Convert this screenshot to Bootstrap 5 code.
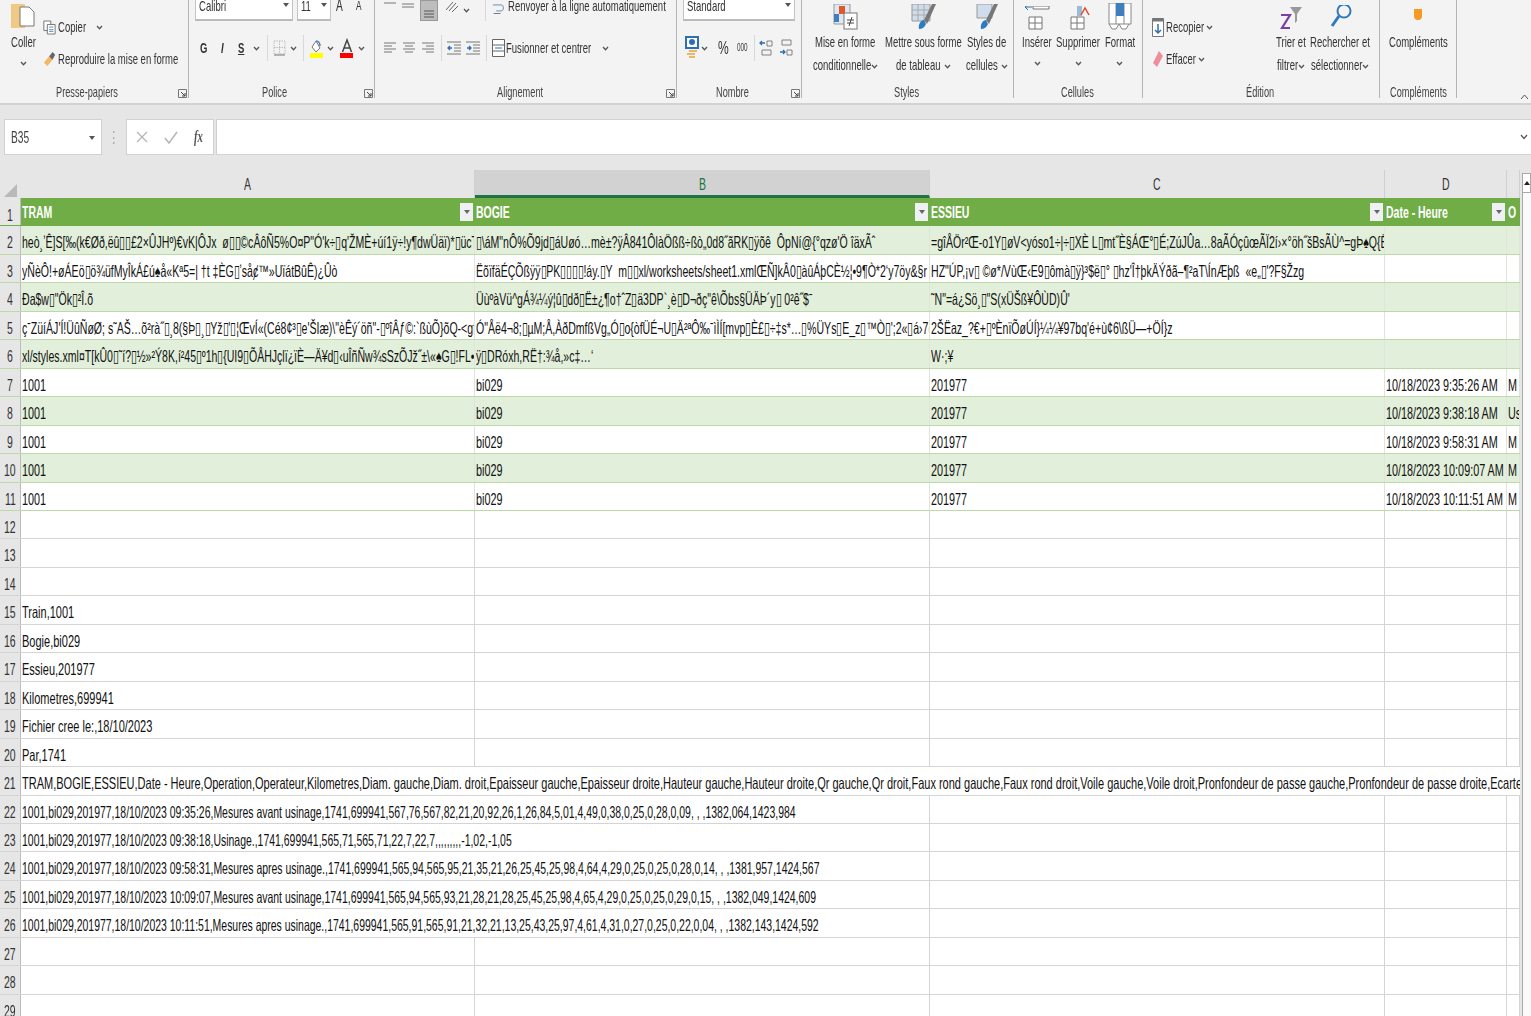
<!DOCTYPE html>
<html lang="fr"><head><meta charset="utf-8"><title>Excel</title>
<link href="https://cdn.jsdelivr.net/npm/bootstrap@5.3.0/dist/css/bootstrap.min.css" rel="stylesheet">
<style>
html,body{height:1016px;overflow:hidden;margin:0;background:#e6e6e6}
body{--k:.635;font-family:"Liberation Sans",sans-serif;font-size:15px;color:#333;line-height:1.2}
.tw{display:inline-block;white-space:pre;transform:scaleX(var(--k));transform-origin:0 0}
.text-decoration-underline .tw{text-decoration:underline}
svg{flex:none}
.ribbon{height:105px;background:#f3f3f3;border-bottom:2px solid #d2d2d2;overflow:hidden;filter:blur(.3px)}
.rgroup{position:relative;flex:none;height:98px;border-right:1px solid #b4b4b4}
.rbody{height:84px;overflow:hidden}
.rlabel{text-align:center;color:#444;font-size:14.5px;height:14px;line-height:16px}
.lp20{padding-right:20px}.lp14{padding-right:14px}.lp8{padding-right:8px}.lp4{padding-right:4px}.lp10{padding-right:10px}
.launch{position:absolute;right:1px;bottom:0;width:9px;height:9px}
.bigb{flex:none;display:flex;flex-direction:column;align-items:center;text-align:center}
.bigicon{height:30px;display:flex;align-items:flex-end;overflow:hidden;flex:none}
.bigline{height:23px;line-height:23px;white-space:nowrap}
.rowb{display:flex;align-items:center;gap:2px;white-space:nowrap;height:32px}
.chev{width:7px;height:5px;flex:none}
.selectb{background:#fff;border:1px solid #c4c4c4;border-top:0;border-bottom:2px solid #bbb;height:21px;display:flex;justify-content:space-between;padding:0 3px 4px;align-items:flex-end;overflow:hidden;flex:none}
.tri{width:0;height:0;border-left:3px solid transparent;border-right:3px solid transparent;border-top:4px solid #555;margin-bottom:8px}
.sepv{width:1px;background:#d8d8d8;height:26px;flex:none}
.toprow{height:21px;display:flex;align-items:center}
.botrow{height:32px;margin-top:11px;display:flex;align-items:center}
.up{margin-bottom:9px}
.boxg{width:20px;text-align:center;font-weight:700}
.boxi{width:17px;text-align:center;font-weight:700}
.ml2{margin-left:2px}.ml4{margin-left:4px}.ml5{margin-left:5px}.ml6{margin-left:6px}.ml7{margin-left:7px}.ml8{margin-left:8px}.ml9{margin-left:9px}.ml10{margin-left:10px}.ml13{margin-left:13px}.mln2{margin-left:-2px}.mln1{margin-left:-1px}.mln6{margin-left:-6px}
.fbar{height:51px;background:#e6e6e6;padding-top:14px;gap:2px;filter:blur(.3px)}
.namebox{width:98px;height:36px;margin-left:4px;background:#fff;border:1px solid #d2d2d2;padding:2px 6px 0;font-size:16px;color:#444}
.fxdots{width:20px;text-align:center;color:#999;font-size:15px;height:36px}
.fxbox{width:88px;height:36px;background:#fff;border:1px solid #d2d2d2;padding:0 9px;gap:16px;flex:none}
.fxt{font-family:"Liberation Serif",serif;font-size:17px;color:#555}
.finput{flex:1;height:36px;background:#fff;border:1px solid #d2d2d2;border-right:0;justify-content:flex-end;padding-right:3px}
.sheetwrap{height:860px;overflow:hidden;padding-top:14px;--k:.655}
.sheet{width:1520px;flex:none;background:#fff;font-size:16.5px;color:#111;filter:blur(.3px)}
.xrow{display:flex;height:28.46px;align-items:stretch;border-bottom:1.5px solid #d4d4d4}
.gk .xc:not(.rn){--k:.64}
.lk .xc:not(.rn){--k:.667}
.dk .xc:not(.rn){--k:.634}
.xhead{height:28px;background:#e6e6e6;border:0}
.xc{flex:none;overflow:hidden;white-space:nowrap;padding-left:1px;line-height:32px;border-right:1px solid #d4d4d4}
.rn{width:21px;padding:0;text-align:center;background:#e6e6e6;color:#333;border-right:1px solid #bdbdbd;font-size:16px;line-height:33px}
.ca{width:454px}.cb{width:455px}.cc{width:455px}.cd{width:122px}.ce{width:13px}.cab{width:909px}.call{width:1499px;border-right:0}
.xhead .xc{text-align:center;padding:0;line-height:30px;color:#333;font-size:16px;border-right:1px solid #cfcfcf}
.xhead .sel{background:#d2d2d2;border-bottom:3px solid #217346;color:#217346}
.tblhead{border-bottom-color:#70ad47}
.tblhead .rn{line-height:30px}
.tblhead .xc:not(.rn){background:#70ad47;color:#fff;font-weight:700;border-right:0;display:flex;justify-content:space-between;align-items:center;font-size:16px}
.tblhead .tw{margin-top:3px}
.fbtn{width:13px;height:18px;background:#eef0f4;display:flex;align-items:center;justify-content:center;margin-right:2px;flex:none}
.fbtn i{display:block;width:0;height:0;border-left:3px solid transparent;border-right:3px solid transparent;border-top:4px solid #666}
.gr{border-bottom-color:#bcd9a8}
.gr .xc:not(.rn){border-right-color:#e0e5dc}
.st .xc:not(.rn){background:#e2efda}
.sbar{width:11px;flex:none;background:#e6e6e6;padding:3px 0 0 2px}
.strack{height:100%;background:#fafafa;border-left:1px solid #aaa}
.sbtn{height:20px;background:#fff;border:1px solid #aaa;border-left:0;display:flex;align-items:center;justify-content:center}
.sbtn i{display:block;width:0;height:0;border-left:3px solid transparent;border-right:3px solid transparent;border-bottom:4px solid #222}
</style></head><body>
<svg width="0" height="0" class="position-absolute"><defs>
<symbol id="cv" viewBox="0 0 7 5"><path d="M1 1l2.500 2.700L6 1" fill="none" stroke="#555" stroke-width="1.300"/></symbol>
<symbol id="ln" viewBox="0 0 9 9"><path d="M.5 8.500v-8h8v8z" fill="none" stroke="#777"/><path d="M3 3l4 4M7 4v3H4" fill="none" stroke="#444"/></symbol>
</defs></svg>

<div class="ribbon d-flex">
 <div class="rgroup" style="width:189px">
  <div class="rbody d-flex">
   <div class="bigb" style="width:42px;margin-left:2px">
    <div class="bigicon"><svg width="30" height="26" viewBox="0 0 30 26"><rect x="3" y="0" width="14" height="24" fill="#f0c987"/><path d="M12 3h9l5 5v14H12z" fill="#fff" stroke="#777"/></svg></div>
    <div class="bigline">Coller</div><svg class="chev mt-2"><use href="#cv"/></svg>
   </div>
   <div style="margin-left:-1px;padding-top:11px">
    <div class="rowb"><svg width="13" height="17" viewBox="0 0 15 17"><path d="M1 1h8v11H1z" fill="#fff" stroke="#666"/><path d="M5 5h9v11H5z" fill="#fff" stroke="#666"/><path d="M7 8h5M7 11h5M7 13h5" stroke="#4a7fb5"/></svg><span>Copier</span><svg class="chev ml8"><use href="#cv"/></svg></div>
    <div class="rowb"><svg width="13" height="18" viewBox="0 0 15 18"><path d="M1 13l6-7 4 4-6 7z" fill="#f0b860"/><path d="M7 6l4-5 3 3-3 6z" fill="#666"/></svg><span>Reproduire la mise en forme</span></div>
   </div>
  </div>
  <div class="rlabel lp14">Presse-papiers</div><svg class="launch"><use href="#ln"/></svg>
 </div>

 <div class="rgroup" style="width:186px;padding-left:6px">
  <div class="rbody">
   <div class="toprow">
    <div class="selectb" style="width:98px"><span>Calibri</span><i class="tri"></i></div>
    <div class="selectb ms-1" style="width:34px"><span>11</span><i class="tri"></i></div>
    <span class="ml5 up" style="font-size:16px">A</span><span class="ml13 up" style="font-size:13px">A</span>
   </div>
   <div class="botrow mln1">
    <span class="boxg">G</span><span class="boxi fst-italic">I</span><span class="boxg text-decoration-underline">S</span><svg class="chev ml2"><use href="#cv"/></svg>
    <div class="sepv ml7"></div>
    <svg class="ml5" width="13" height="16" viewBox="0 0 13 16"><path d="M1 1h11v13H1zM1 7.500h11M6.500 1v13" fill="none" stroke="#bbb" stroke-dasharray="1.500 1"/><path d="M1 15h11" stroke="#777"/></svg><svg class="chev ml4"><use href="#cv"/></svg>
    <div class="sepv ml6"></div>
    <svg class="ml5" width="14" height="20" viewBox="0 0 14 20"><path d="M3 9l4-6 4 7-4 4z" fill="#fff" stroke="#777"/><path d="M7 3c3 0 4 3 4 5" fill="none" stroke="#4a7fb5" stroke-width="1.500"/><rect x="1" y="15" width="13" height="5" fill="#ff0"/></svg><svg class="chev ml4"><use href="#cv"/></svg>
    <svg class="ml6" width="14" height="20" viewBox="0 0 14 20"><path d="M2.500 14L7 2l4.500 12M4 10h6" fill="none" stroke="#444" stroke-width="1.500"/><rect x="0" y="15" width="13" height="5" fill="#f00"/></svg><svg class="chev ml4"><use href="#cv"/></svg>
   </div>
  </div>
  <div class="rlabel lp20">Police</div><svg class="launch"><use href="#ln"/></svg>
 </div>

 <div class="rgroup" style="width:302px;padding-left:9px">
  <div class="rbody">
   <div class="toprow" style="gap:6px">
    <svg width="12" height="21" viewBox="0 0 12 21"><path d="M0 3h12" stroke="#777"/></svg>
    <svg width="12" height="21" viewBox="0 0 12 21"><path d="M0 4h12M0 7h12" stroke="#777"/></svg>
    <div style="width:18px;height:21px;background:#bdbdbd;border:1px solid #999;flex:none"><svg width="16" height="19" viewBox="0 0 16 19"><path d="M3 9h10M3 12h10M3 15h10" stroke="#555"/></svg></div>
    <svg width="18" height="21" viewBox="0 0 18 21"><path d="M2 10l7-8M5 11l7-8M8 12l6-6" stroke="#666"/></svg><svg class="chev" style="margin-left:-5px"><use href="#cv"/></svg>
    <div class="sepv ml9" style="height:21px"></div>
    <svg width="12" height="21" viewBox="0 0 14 21"><path d="M1 4h10c3 0 3 7 0 7H5" fill="none" stroke="#4a7fb5"/><path d="M2 14h8" stroke="#666"/></svg><span class="up mln2" style="white-space:nowrap">Renvoyer à la ligne automatiquement</span>
   </div>
   <div class="botrow" style="gap:7px">
    <svg width="12" height="14" viewBox="0 0 12 14"><path d="M0 2h12M0 5h8M0 8h12M0 11h8" stroke="#777"/></svg>
    <svg width="12" height="14" viewBox="0 0 12 14"><path d="M0 2h12M2 5h8M0 8h12M2 11h8" stroke="#777"/></svg>
    <svg width="12" height="14" viewBox="0 0 12 14"><path d="M0 2h12M4 5h8M0 8h12M4 11h8" stroke="#777"/></svg>
    <div class="sepv"></div>
    <svg class="mln2" width="14" height="14" viewBox="0 0 14 14"><path d="M0 1h14M7 4h7M7 7h7M7 10h7M0 13h14" stroke="#777"/><path d="M5 7H1m2-2L1 7l2 2" fill="none" stroke="#2b6fb5" stroke-width="1.300"/></svg>
    <svg class="mln2" width="14" height="14" viewBox="0 0 14 14"><path d="M0 1h14M7 4h7M7 7h7M7 10h7M0 13h14" stroke="#777"/><path d="M1 7h4M3 5l2 2-2 2" fill="none" stroke="#2b6fb5" stroke-width="1.300"/></svg>
    <div class="sepv mln1"></div>
    <svg class="mln2" width="13" height="18" viewBox="0 0 13 18"><path d="M.5.500h12v17H.500zM.5 6h12M.5 12h12" fill="#fff" stroke="#666"/><path d="M3 9h7" stroke="#2b6fb5"/></svg><span class="mln6" style="white-space:nowrap">Fusionner et centrer</span><svg class="chev ml4"><use href="#cv"/></svg>
   </div>
  </div>
  <div class="rlabel lp20">Alignement</div><svg class="launch"><use href="#ln"/></svg>
 </div>

 <div class="rgroup" style="width:125px;padding-left:6px">
  <div class="rbody">
   <div class="selectb" style="width:112px"><span>Standard</span><i class="tri"></i></div>
   <div class="botrow" style="padding-left:2px">
    <svg width="14" height="24" viewBox="0 0 14 24"><rect x="1" y="1" width="12" height="11" fill="#fff" stroke="#2b6fb5" stroke-width="2"/><circle cx="7" cy="6" r="3" fill="#2b6fb5"/><path d="M4 15h8M2 18h8M4 21h6" stroke="#eab765" stroke-width="2"/></svg><svg class="chev ml2"><use href="#cv"/></svg>
    <span class="ml10" style="font-size:19px">%</span><span class="ml8" style="font-size:10px">000</span><div class="sepv ml7"></div>
    <svg class="ml4" width="15" height="20" viewBox="0 0 15 20"><path d="M6 5H1m2-2L1 5l2 2" fill="none" stroke="#2b6fb5" stroke-width="1.300"/><path d="M8 3h5v5H8zM3 12h9v5H3z" fill="none" stroke="#777" stroke-width=".9"/></svg>
    <svg class="ml5" width="15" height="20" viewBox="0 0 15 20"><path d="M3 2h9v5H3zM8 12h5v5H8z" fill="none" stroke="#777" stroke-width=".9"/><path d="M1 14h5m-2-2l2 2-2 2" fill="none" stroke="#2b6fb5" stroke-width="1.300"/></svg>
   </div>
  </div>
  <div class="rlabel lp20">Nombre</div><svg class="launch"><use href="#ln"/></svg>
 </div>

 <div class="rgroup" style="width:212px;padding-left:6px">
  <div class="rbody d-flex">
   <div class="bigb" style="width:75px"><div class="bigicon"><svg width="26" height="26" viewBox="0 0 26 26"><path d="M1 0h16v20H1z" fill="#dfe8f2" stroke="#999"/><rect x="6" y="2" width="6" height="8" fill="#e0592a"/><rect x="1" y="10" width="5" height="8" fill="#3f7fc0"/><rect x="11" y="9" width="13" height="16" fill="#fff" stroke="#777"/><path d="M14 16h7M14 19h7M19 13l-3 9" stroke="#444" fill="none"/></svg></div>
    <div class="bigline">Mise en forme</div><div class="bigline">conditionnelle<svg class="chev"><use href="#cv"/></svg></div></div>
   <div class="bigb" style="width:81px"><div class="bigicon"><svg width="26" height="26" viewBox="0 0 26 26"><path d="M1 0h18v17H1z" fill="#cfdcec" stroke="#999"/><path d="M1 6h18M1 11h18M7 0v17M13 0v17" stroke="#aaa"/><path d="M8 25c-1-5 2-9 5-9l2 4c-1 3-4 5-7 5z" fill="#2b7cc4"/><path d="M13 16L21 0h4l-9 20z" fill="#777"/></svg></div>
    <div class="bigline">Mettre sous forme</div><div class="bigline">de tableau<svg class="chev ms-1"><use href="#cv"/></svg></div></div>
   <div class="bigb" style="width:46px"><div class="bigicon"><svg width="26" height="26" viewBox="0 0 26 26"><path d="M3 0h15v14H3z" fill="#cfdcec" stroke="#999"/><path d="M7 25c-1-5 2-9 5-9l2 4c-1 3-4 5-7 5z" fill="#2b7cc4"/><path d="M12 16L20 0h4l-9 20z" fill="#777"/></svg></div>
    <div class="bigline">Styles de</div><div class="bigline">cellules<svg class="chev ms-1"><use href="#cv"/></svg></div></div>
  </div>
  <div class="rlabel lp8">Styles</div>
 </div>

 <div class="rgroup" style="width:129px;padding-left:2px">
  <div class="rbody d-flex">
   <div class="bigb" style="width:42px"><div class="bigicon"><svg width="26" height="24" viewBox="0 0 26 24"><path d="M9 0h16v3H9zM5 11h13v12H5zM11 11v12M5 17h13" fill="#fff" stroke="#777"/><path d="M8 1H2m2-2L1 1l3 3" stroke="#2b6fb5" fill="none"/></svg></div>
    <div class="bigline">Insérer</div><svg class="chev mt-2"><use href="#cv"/></svg></div>
   <div class="bigb" style="width:41px"><div class="bigicon"><svg width="26" height="24" viewBox="0 0 26 24"><path d="M5 11h13v12H5zM11 11v12M5 17h13" fill="#fff" stroke="#777"/><path d="M11 0h5v10h-5z" fill="#9cbbdc"/><path d="M15 9l4-7 4 7" fill="none" stroke="#e0492a" stroke-width="1.500"/></svg></div>
    <div class="bigline">Supprimer</div><svg class="chev mt-2"><use href="#cv"/></svg></div>
   <div class="bigb" style="width:41px"><div class="bigicon"><svg width="24" height="27" viewBox="0 0 24 27"><path d="M1 0h22v21H1zM8 0v21M16 0v21M1 21l3 5h4l3-5 3 5h4l3-5" fill="#fff" stroke="#888"/><rect x="8" y="0" width="8" height="13" fill="#3f7fc0"/></svg></div>
    <div class="bigline">Format</div><svg class="chev mt-2"><use href="#cv"/></svg></div>
  </div>
  <div class="rlabel lp4">Cellules</div>
 </div>

 <div class="rgroup" style="width:237px;padding-left:9px">
  <div class="rbody d-flex">
   <div style="width:120px;padding-top:11px;flex:none">
    <div class="rowb"><svg width="12" height="19" viewBox="0 0 12 19"><path d="M.5.500h11v18H.500z" fill="#fff" stroke="#777"/><path d="M.5.500h11v3H.500z" fill="#777"/><path d="M6 6v9M3 12l3 3 3-3" fill="none" stroke="#2b6fb5" stroke-width="1.500"/></svg><span>Recopier</span><svg class="chev"><use href="#cv"/></svg></div>
    <div class="rowb"><svg width="12" height="18" viewBox="0 0 12 18"><path d="M7 1l4 5-6 11-4-4z" fill="#ec8f9c"/></svg><span>Effacer</span><svg class="chev"><use href="#cv"/></svg></div>
   </div>
   <div class="bigb" style="width:46px;margin-left:-4px"><div class="bigicon"><svg width="24" height="25" viewBox="0 0 24 25"><path d="M2 10h9l-8 13h8" fill="none" stroke="#7b3fa8" stroke-width="2.200"/><path d="M11 2h12l-5 7v7l-2 2V9z" fill="#999"/></svg></div>
    <div class="bigline">Trier et</div><div class="bigline">filtrer<svg class="chev"><use href="#cv"/></svg></div></div>
   <div class="bigb" style="width:52px"><div class="bigicon"><svg width="24" height="25" viewBox="0 0 24 25"><circle cx="16" cy="6" r="6.500" fill="none" stroke="#3378bd" stroke-width="2"/><path d="M11 11L4 21" stroke="#3378bd" stroke-width="3"/></svg></div>
    <div class="bigline">Rechercher et</div><div class="bigline">sélectionner<svg class="chev"><use href="#cv"/></svg></div></div>
  </div>
  <div class="rlabel lp10">Édition</div>
 </div>

 <div class="rgroup" style="width:77px">
  <div class="rbody"><div class="bigb"><div class="bigicon"><svg width="10" height="25" viewBox="0 0 10 25"><path d="M1 0h8v7a4 4 0 0 1-8 0z" fill="#f59a23" transform="translate(0 4)"/></svg></div><div class="bigline">Compléments</div></div></div>
  <div class="rlabel">Compléments</div>
 </div>
 <div class="flex-grow-1 d-flex justify-content-end align-items-end" style="height:100px;padding-right:2px"><svg width="9" height="6" viewBox="0 0 9 6"><path d="M1 5l3.500-4L8 5" fill="none" stroke="#555"/></svg></div>
</div>

<div class="fbar d-flex">
 <div class="namebox d-flex align-items-center justify-content-between"><span>B35</span><i class="tri m-0"></i></div>
 <div class="fxdots d-flex align-items-center justify-content-center">⋮</div>
 <div class="fxbox d-flex align-items-center"><svg width="12" height="12" viewBox="0 0 12 12"><path d="M1 1l10 10M11 1L1 11" stroke="#b5b5b5" stroke-width="1.300"/></svg><svg width="14" height="13" viewBox="0 0 14 13"><path d="M1 7l4 5 8-11" fill="none" stroke="#b5b5b5" stroke-width="1.500"/></svg><span class="fst-italic fw-bold fxt">fx</span></div>
 <div class="finput d-flex align-items-center"><svg width="8" height="6" viewBox="0 0 8 6"><path d="M1 1l3 3.500L7 1" fill="none" stroke="#555" stroke-width="1.200"/></svg></div>
</div>

<div class="sheetwrap d-flex">
 <div class="sheet">
  <div class="xrow xhead"><div class="xc rn d-flex align-items-end justify-content-center" style="border:0"><svg width="15" height="16" viewBox="0 0 15 16"><path d="M14 2v13H1z" fill="#b9b9b9"/></svg></div><div class="xc ca">A</div><div class="xc cb sel">B</div><div class="xc cc">C</div><div class="xc cd">D</div><div class="xc ce"></div></div>
  <div class="xrow tblhead"><div class="xc rn">1</div><div class="xc ca">TRAM<span class="fbtn"><i></i></span></div><div class="xc cb">BOGIE<span class="fbtn"><i></i></span></div><div class="xc cc">ESSIEU<span class="fbtn"><i></i></span></div><div class="xc cd">Date - Heure<span class="fbtn"><i></i></span></div><div class="xc ce">O</div></div>
  <div class="xrow gr st gk"><div class="xc rn">2</div><div class="xc ca">heò¸ʼÊ]S[‰(k€Øð,ëû▯▯£2×ÛJHº)€vK|ÔJx  ø▯▯©cÂôÑ5%O¤P"Ó'k÷▯q'ŽMÈ+úí1ÿ÷!y¶dwÜäï)*▯ücT.</div><div class="xc cb">▯\áM"nÔ%Õ9jd▯áUøó…mè±?ÿÂ841ÔlàÖßß÷ßò„0d8˝ãRK▯ÿõê  ÔpNí@{°qzø'Ö îäxÃˆ</div><div class="xc cc">=gîÅÖr²Œ-o1Y▯øV&lt;yóso1÷|÷▯XÈ L▯mt˝È§ÁŒ°▯É;ZúJÛa…8aÃÓçûœÃÏ2í›×°öh˝šBsÃÙ^=gÞ♠Q{Ë«T</div><div class="xc cd"></div><div class="xc ce"></div></div>
  <div class="xrow gr gk"><div class="xc rn">3</div><div class="xc ca">yÑèÔ!+øÁEö▯ö¾üfMyÎkÁ£ú♠å«Kª5=| †t ‡ÈG▯ʼsåȼ™»UïátBûÊ)¿Ûò</div><div class="xc cb">ËõïfäÉÇÕßÿÿ▯PK▯▯▯▯!áy.▯Y  m▯▯xl/worksheets/sheet1.xmlŒÑ]kÂ0▯àûÁþCÈ½¦•9¶Ò*2‘y7öy&amp;§r</div><div class="xc cc">HZ"ÚP,¡v▯ ©ø*/VùŒ‹E9▯ômà▯ÿ}³$ë▯° ▯hz'Î†þkÄÝðã–¶²aT\ÍnÆþß  «e„▯'?F§Žzg</div><div class="xc cd"></div><div class="xc ce"></div></div>
  <div class="xrow gr st gk"><div class="xc rn">4</div><div class="xc ca">Ða$w▯"Ök▯²Î.õ</div><div class="xc cb">ÜùºàVü^gÁ¾¼ý¦û▯dð▯Ë±¿¶o†ˆZ▯ä3DP`¸è▯D¬ðç"ê\Õbs§ÜÄÞ´y▯ 0²ê˝$ˉ</div><div class="xc cc">˜N"=á¿Sö¸▯"S(xÜŠß¥ÔÙD)Û'</div><div class="xc cd"></div><div class="xc ce"></div></div>
  <div class="xrow gr gk"><div class="xc rn">5</div><div class="xc ca">çˉZüíÁJ'Í!ÜûÑøØ; s˜AŠ…õ²rà˝▯¸8(§Þ▯¸▯Yž▯'▯¦ŒvÍ«(Cé8¢³▯e'ŠIæ)\"èÊý´öñ"-▯ºîÂƒ©:`ßùÕ}õQ-&lt;gf</div><div class="xc cb">Ó"Åë4¬8;▯µM;Å,ÀðDmfßVg„Ó▯o{òfÜÉ¬U▯Ä²ªÔ‰ˉìÌÍ[mvp▯È£▯÷‡s*…▯%ÜYs▯E_z▯™Ò▯';2«▯á›7ç¤åÍ</div><div class="xc cc">2ŠËaz_?€+▯ºÈnïÕøÚÍ}¼¼¥97bq'é+ù¢6\ßÜ—+ÖÍ}z</div><div class="xc cd"></div><div class="xc ce"></div></div>
  <div class="xrow gr st gk"><div class="xc rn">6</div><div class="xc ca">xl/styles.xml¤T[kÛ0▯˜í?▯½»²Ý8K,í²45▯º1h▯{UI9▯ÕÅHJçlï¿ïÈ—Ä¥d▯‹uÎñÑw¾sSzÕJž˝±\«♠G▯!FL•ºê</div><div class="xc cb">ÿ▯DRóxh,RË†:¾å,»c‡…‘</div><div class="xc cc">W·;¥</div><div class="xc cd"></div><div class="xc ce"></div></div>
  <div class="xrow gr"><div class="xc rn">7</div><div class="xc ca">1001</div><div class="xc cb">bi029</div><div class="xc cc">201977</div><div class="xc cd">10/18/2023 9:35:26 AM</div><div class="xc ce">M</div></div>
  <div class="xrow gr st"><div class="xc rn">8</div><div class="xc ca">1001</div><div class="xc cb">bi029</div><div class="xc cc">201977</div><div class="xc cd">10/18/2023 9:38:18 AM</div><div class="xc ce">Us</div></div>
  <div class="xrow gr"><div class="xc rn">9</div><div class="xc ca">1001</div><div class="xc cb">bi029</div><div class="xc cc">201977</div><div class="xc cd">10/18/2023 9:58:31 AM</div><div class="xc ce">M</div></div>
  <div class="xrow gr st"><div class="xc rn">10</div><div class="xc ca">1001</div><div class="xc cb">bi029</div><div class="xc cc">201977</div><div class="xc cd">10/18/2023 10:09:07 AM</div><div class="xc ce">M</div></div>
  <div class="xrow gr"><div class="xc rn">11</div><div class="xc ca">1001</div><div class="xc cb">bi029</div><div class="xc cc">201977</div><div class="xc cd">10/18/2023 10:11:51 AM</div><div class="xc ce">M</div></div>
  <div class="xrow"><div class="xc rn">12</div><div class="xc ca"></div><div class="xc cb"></div><div class="xc cc"></div><div class="xc cd"></div><div class="xc ce"></div></div>
  <div class="xrow"><div class="xc rn">13</div><div class="xc ca"></div><div class="xc cb"></div><div class="xc cc"></div><div class="xc cd"></div><div class="xc ce"></div></div>
  <div class="xrow"><div class="xc rn">14</div><div class="xc ca"></div><div class="xc cb"></div><div class="xc cc"></div><div class="xc cd"></div><div class="xc ce"></div></div>
  <div class="xrow lk"><div class="xc rn">15</div><div class="xc ca">Train,1001</div><div class="xc cb"></div><div class="xc cc"></div><div class="xc cd"></div><div class="xc ce"></div></div>
  <div class="xrow lk"><div class="xc rn">16</div><div class="xc ca">Bogie,bi029</div><div class="xc cb"></div><div class="xc cc"></div><div class="xc cd"></div><div class="xc ce"></div></div>
  <div class="xrow lk"><div class="xc rn">17</div><div class="xc ca">Essieu,201977</div><div class="xc cb"></div><div class="xc cc"></div><div class="xc cd"></div><div class="xc ce"></div></div>
  <div class="xrow lk"><div class="xc rn">18</div><div class="xc ca">Kilometres,699941</div><div class="xc cb"></div><div class="xc cc"></div><div class="xc cd"></div><div class="xc ce"></div></div>
  <div class="xrow lk"><div class="xc rn">19</div><div class="xc ca">Fichier cree le:,18/10/2023</div><div class="xc cb"></div><div class="xc cc"></div><div class="xc cd"></div><div class="xc ce"></div></div>
  <div class="xrow lk"><div class="xc rn">20</div><div class="xc ca">Par,1741</div><div class="xc cb"></div><div class="xc cc"></div><div class="xc cd"></div><div class="xc ce"></div></div>
  <div class="xrow lk"><div class="xc rn">21</div><div class="xc call">TRAM,BOGIE,ESSIEU,Date - Heure,Operation,Operateur,Kilometres,Diam. gauche,Diam. droit,Epaisseur gauche,Epaisseur droite,Hauteur gauche,Hauteur droite,Qr gauche,Qr droit,Faux rond gauche,Faux rond droit,Voile gauche,Voile droit,Pronfondeur de passe gauche,Pronfondeur de passe droite,Ecarte</div></div>
  <div class="xrow dk"><div class="xc rn">22</div><div class="xc cab">1001,bi029,201977,18/10/2023 09:35:26,Mesures avant usinage,1741,699941,567,76,567,82,21,20,92,26,1,26,84,5,01,4,49,0,38,0,25,0,28,0,09, , ,1382,064,1423,984</div><div class="xc cc"></div><div class="xc cd"></div><div class="xc ce"></div></div>
  <div class="xrow dk"><div class="xc rn">23</div><div class="xc cab">1001,bi029,201977,18/10/2023 09:38:18,Usinage.,1741,699941,565,71,565,71,22,7,22,7,,,,,,,,,-1,02,-1,05</div><div class="xc cc"></div><div class="xc cd"></div><div class="xc ce"></div></div>
  <div class="xrow dk"><div class="xc rn">24</div><div class="xc cab">1001,bi029,201977,18/10/2023 09:58:31,Mesures apres usinage.,1741,699941,565,94,565,95,21,35,21,26,25,45,25,98,4,64,4,29,0,25,0,25,0,28,0,14, , ,1381,957,1424,567</div><div class="xc cc"></div><div class="xc cd"></div><div class="xc ce"></div></div>
  <div class="xrow dk"><div class="xc rn">25</div><div class="xc cab">1001,bi029,201977,18/10/2023 10:09:07,Mesures avant usinage,1741,699941,565,94,565,93,21,28,21,28,25,45,25,98,4,65,4,29,0,25,0,25,0,29,0,15, , ,1382,049,1424,609</div><div class="xc cc"></div><div class="xc cd"></div><div class="xc ce"></div></div>
  <div class="xrow dk"><div class="xc rn">26</div><div class="xc cab">1001,bi029,201977,18/10/2023 10:11:51,Mesures apres usinage.,1741,699941,565,91,565,91,21,32,21,13,25,43,25,97,4,61,4,31,0,27,0,25,0,22,0,04, , ,1382,143,1424,592</div><div class="xc cc"></div><div class="xc cd"></div><div class="xc ce"></div></div>
  <div class="xrow"><div class="xc rn">27</div><div class="xc ca"></div><div class="xc cb"></div><div class="xc cc"></div><div class="xc cd"></div><div class="xc ce"></div></div>
  <div class="xrow"><div class="xc rn">28</div><div class="xc ca"></div><div class="xc cb"></div><div class="xc cc"></div><div class="xc cd"></div><div class="xc ce"></div></div>
  <div class="xrow"><div class="xc rn">29</div><div class="xc ca"></div><div class="xc cb"></div><div class="xc cc"></div><div class="xc cd"></div><div class="xc ce"></div></div>
 </div>
 <div class="sbar"><div class="strack"><div class="sbtn"><i></i></div></div></div>
</div>
<script>
/* The reference shows a narrow face that is not installed: narrow every text run and give back the width it frees. */
(function(){
 var w=document.createTreeWalker(document.body,NodeFilter.SHOW_TEXT),n,list=[];
 while(n=w.nextNode()){var p=n.parentNode.nodeName.toLowerCase();if(n.nodeValue.trim()&&p!=='script'&&p!=='style'&&!n.parentNode.closest('svg'))list.push(n);}
 var spans=list.map(function(t){var s=document.createElement('span');s.className='tw';t.parentNode.insertBefore(s,t);s.appendChild(t);return s;});
 spans.forEach(function(s){var k=parseFloat(getComputedStyle(s).getPropertyValue('--k'));s.style.marginRight=(-s.offsetWidth*(1-k))+'px';});
})();
</script>
</body></html>
